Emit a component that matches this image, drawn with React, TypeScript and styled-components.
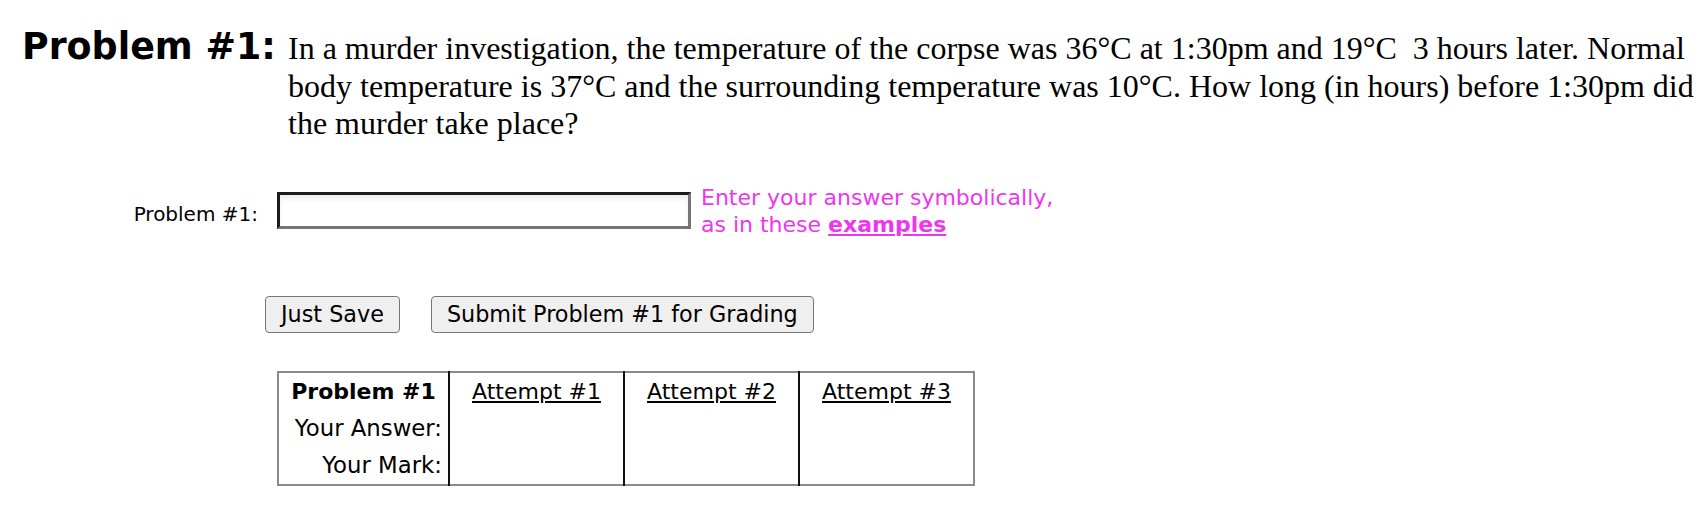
import * as React from 'react';
import styled, { createGlobalStyle } from 'styled-components';

const GlobalStyle = createGlobalStyle`
  html, body {
    margin: 0;
    padding: 0;
    background: #ffffff;
  }
  body {
    font-family: "DejaVu Sans", Verdana, sans-serif;
    color: #000000;
  }
`

const Page = styled.div`
  padding: 0 8px;
  width: 1704px;
  box-sizing: border-box;
`

const Statement = styled.div`
  display: flex;
  align-items: flex-start;
  padding-top: 30px;
`

const Heading = styled.h2`
  flex: 0 0 265px;
  width: 265px;
  min-width: 0;
  margin: -3px 0 0 0;
  padding-left: 14px;
  box-sizing: border-box;
  font-family: "DejaVu Sans", Verdana, sans-serif;
  font-weight: bold;
  font-size: 36.4px;
  line-height: 40px;
  white-space: nowrap;
`

const Question = styled.p`
  flex: 1;
  min-width: 0;
  margin: 0 0 0 15px;
  font-family: "Liberation Serif", "Times New Roman", serif;
  font-size: 32px;
  line-height: 37.5px;
  white-space: nowrap;
`

const AnswerRow = styled.div`
  display: flex;
  align-items: center;
  margin-top: 41px;
`

const AnswerLabel = styled.label`
  flex: 0 0 250px;
  padding-top: 6px;
  text-align: right;
  font-size: 20px;
`

const AnswerInput = styled.input`
  box-sizing: border-box;
  width: 414px;
  height: 37px;
  margin: 0 10px 0 19px;
  border-style: solid;
  border-width: 3px;
  border-color: #1c1c1c #767676 #767676 #1c1c1c;
  background: #ffffff;
  box-shadow: inset 0 4px 5px rgba(0, 0, 0, 0.07);
  outline: none;
`

const Hint = styled.div`
  color: #ee36ee;
  font-size: 22px;
  line-height: 27px;

  a {
    color: #ee36ee;
    font-weight: bold;
    text-decoration: underline;
  }
`

const ButtonBar = styled.div`
  display: flex;
  gap: 31px;
  margin: 58px 0 0 257px;
`

const Button = styled.button`
  height: 37px;
  padding: 0 15px;
  font-family: "DejaVu Sans", Verdana, sans-serif;
  font-size: 22.3px;
  color: #000000;
  background: #efefef;
  border: 1px solid #767676;
  border-radius: 4px;
`

const Attempts = styled.table`
  margin: 38px 0 0 269px;
  border-collapse: collapse;
  border: 2px solid #8a8a8a;
  font-size: 22px;

  th, td {
    padding: 0 6px;
    height: 37px;
  }
  th {
    font-weight: bold;
    text-align: center;
  }
  td {
    text-align: right;
    font-size: 22.8px;
  }
  .attempt {
    border-left: 2px solid #111111;
    font-weight: normal;
  }
  a {
    color: #000000;
    text-decoration: underline;
  }
`

const attempts = [1, 2, 3]

export default function App() {
  return (
    <Page>
      <GlobalStyle />
      <Statement>
        <Heading>Problem #1:</Heading>
        <Question>
          In a murder investigation, the temperature of the corpse was 36°C at 1:30pm and 19°C&nbsp; 3 hours later. Normal<br />
          body temperature is 37°C and the surrounding temperature was 10°C. How long (in hours) before 1:30pm did<br />
          the murder take place?
        </Question>
      </Statement>

      <AnswerRow>
        <AnswerLabel htmlFor='answer-1'>Problem #1:</AnswerLabel>
        <AnswerInput id='answer-1' type='text' />
        <Hint>
          Enter your answer symbolically,<br />
          as in these <a href='#examples'>examples</a>
        </Hint>
      </AnswerRow>

      <ButtonBar>
        <Button type='button'>Just Save</Button>
        <Button type='button'>Submit Problem #1 for Grading</Button>
      </ButtonBar>

      <Attempts>
        <colgroup>
          <col style={{ width: 171 }} />
          {attempts.map(n => <col key={n} style={{ width: 175 }} />)}
        </colgroup>
        <tbody>
          <tr>
            <th>Problem #1</th>
            {attempts.map(n => (
              <th key={n} className='attempt'><a href={`#attempt-${n}`}>Attempt #{n}</a></th>
            ))}
          </tr>
          <tr>
            <td>Your Answer:</td>
            {attempts.map(n => <td key={n} className='attempt'></td>)}
          </tr>
          <tr>
            <td>Your Mark:</td>
            {attempts.map(n => <td key={n} className='attempt'></td>)}
          </tr>
        </tbody>
      </Attempts>
    </Page>
  );
}
